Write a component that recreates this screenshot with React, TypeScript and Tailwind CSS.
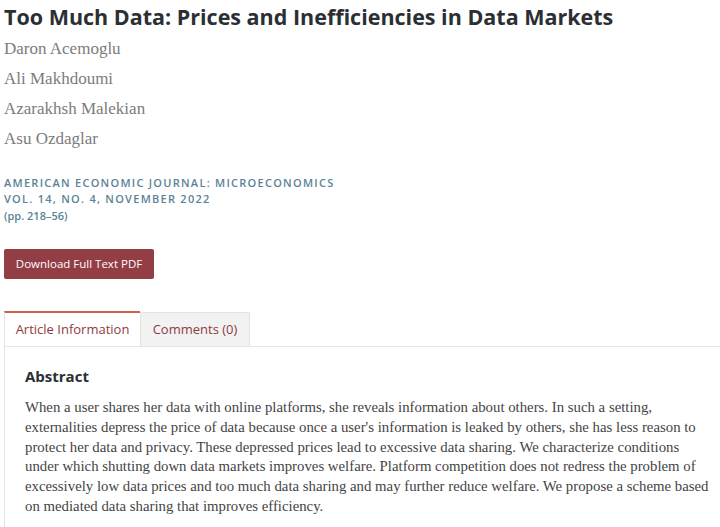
export default function App() {
  const authors = ['Daron Acemoglu', 'Ali Makhdoumi', 'Azarakhsh Malekian', 'Asu Ozdaglar']
  return (
    <div className="bg-white w-[720px] h-[527px] overflow-hidden text-[#333]">
      <div className="pl-[4px]">
        <h1 className="font-['Open_Sans',sans-serif] font-bold text-[21.5px] leading-[30px] text-[#2b2f33] pt-[2px]">
          Too Much Data: Prices and Inefficiencies in Data Markets
        </h1>
        <ul className="font-['Liberation_Serif',serif] text-[17px] text-[#7c7c7c] leading-[30px] pt-[2px]">
          {authors.map(a => <li key={a}>{a}</li>)}
        </ul>
        <div className="mt-[21px] font-['Open_Sans',sans-serif] text-[#5b8397] font-semibold uppercase tracking-[0.115em] text-[11px] leading-[16px]">
          <p>American Economic Journal: Microeconomics</p>
          <p>Vol. 14, No. 4, November 2022</p>
        </div>
        <p className="font-['Open_Sans',sans-serif] text-[#5b8397] font-semibold text-[11px] leading-[18px]">(pp. 218–56)</p>
        <button className="mt-[24px] bg-[#933d45] text-white font-['Open_Sans',sans-serif] text-[11.5px] rounded-[2px] h-[30px] w-[150px]">
          Download Full Text PDF
        </button>
      </div>
      <div className="mt-[32px] pl-[4px]">
        <div className="flex border-b border-[#e6e6e6] font-['Open_Sans',sans-serif] text-[13px] text-[#8f3a42]">
          <div className="border-t-2 border-t-[#d0604b] border-l border-l-[#e3e3e3] bg-white w-[136px] h-[35px] flex items-center justify-center -mb-px">
            Article Information
          </div>
          <div className="border border-[#e3e3e3] border-b-0 bg-[#f2f2f2] w-[110px] h-[34px] flex items-center justify-center mt-[1px]">
            Comments (0)
          </div>
        </div>
        <div className="border-l border-[#e3e3e3] pl-[20px] pr-[8px] pt-[18px] pb-[20px]">
          <h2 className="font-['Open_Sans',sans-serif] font-bold text-[15px] text-[#2b2f33] leading-[22px]">Abstract</h2>
          <p className="mt-[11px] font-['Liberation_Serif',serif] text-[14.8px] leading-[19.8px] text-[#444]">
            When a user shares her data with online platforms, she reveals information about others. In such a setting, externalities depress the price of data because once a user's information is leaked by others, she has less reason to protect her data and privacy. These depressed prices lead to excessive data sharing. We characterize conditions under which shutting down data markets improves welfare. Platform competition does not redress the problem of excessively low data prices and too much data sharing and may further reduce welfare. We propose a scheme based on mediated data sharing that improves efficiency.
          </p>
        </div>
      </div>
    </div>
  )
}
